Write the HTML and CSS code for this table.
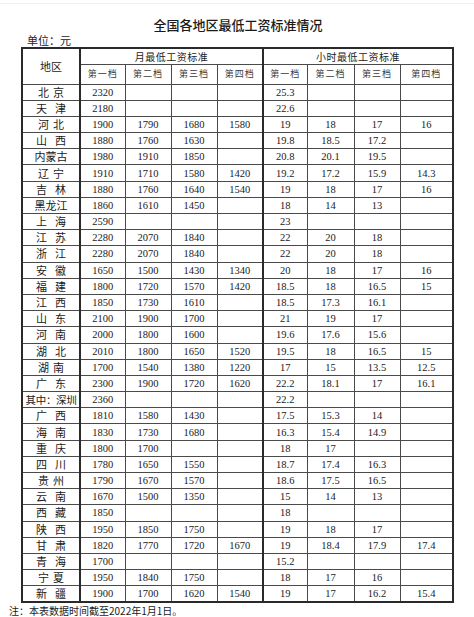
FILE: index.html
```html
<!DOCTYPE html>
<html lang="zh-CN">
<head>
<meta charset="utf-8">
<title>全国各地区最低工资标准情况</title>
<link rel="stylesheet" href="styles.css">
</head>
<body>
<div class="page">
  <h1 class="title">全国各地区最低工资标准情况</h1>
  <div class="unit">单位：元</div>
  <table class="wage">
    <colgroup>
      <col class="c-region"><col class="c1"><col class="c2"><col class="c3"><col class="c4">
      <col class="c5"><col class="c6"><col class="c7"><col class="c8">
    </colgroup>
    <thead>
      <tr class="h1">
        <th rowspan="2" class="region thick">地区</th>
        <th colspan="4" class="group thick">月最低工资标准</th>
        <th colspan="4" class="group">小时最低工资标准</th>
      </tr>
      <tr class="h2">
        <th class="sub">第一档</th><th class="sub">第二档</th><th class="sub">第三档</th><th class="sub thick">第四档</th>
        <th class="sub">第一档</th><th class="sub">第二档</th><th class="sub">第三档</th><th class="sub">第四档</th>
      </tr>
    </thead>
    <tbody>
      <tr><td class="region"><span class="nm n">北京</span></td><td>2320</td><td></td><td></td><td class="thick"></td><td>25.3</td><td></td><td></td><td></td></tr>
      <tr><td class="region"><span class="nm w">天津</span></td><td>2180</td><td></td><td></td><td class="thick"></td><td>22.6</td><td></td><td></td><td></td></tr>
      <tr><td class="region"><span class="nm n">河北</span></td><td>1900</td><td>1790</td><td>1680</td><td class="thick">1580</td><td>19</td><td>18</td><td>17</td><td>16</td></tr>
      <tr><td class="region"><span class="nm w">山西</span></td><td>1880</td><td>1760</td><td>1630</td><td class="thick"></td><td>19.8</td><td>18.5</td><td>17.2</td><td></td></tr>
      <tr><td class="region"><span class="nm">内蒙古</span></td><td>1980</td><td>1910</td><td>1850</td><td class="thick"></td><td>20.8</td><td>20.1</td><td>19.5</td><td></td></tr>
      <tr><td class="region"><span class="nm n">辽宁</span></td><td>1910</td><td>1710</td><td>1580</td><td class="thick">1420</td><td>19.2</td><td>17.2</td><td>15.9</td><td>14.3</td></tr>
      <tr><td class="region"><span class="nm w">吉林</span></td><td>1880</td><td>1760</td><td>1640</td><td class="thick">1540</td><td>19</td><td>18</td><td>17</td><td>16</td></tr>
      <tr><td class="region"><span class="nm">黑龙江</span></td><td>1860</td><td>1610</td><td>1450</td><td class="thick"></td><td>18</td><td>14</td><td>13</td><td></td></tr>
      <tr><td class="region"><span class="nm w">上海</span></td><td>2590</td><td></td><td></td><td class="thick"></td><td>23</td><td></td><td></td><td></td></tr>
      <tr><td class="region"><span class="nm w">江苏</span></td><td>2280</td><td>2070</td><td>1840</td><td class="thick"></td><td>22</td><td>20</td><td>18</td><td></td></tr>
      <tr><td class="region"><span class="nm w">浙江</span></td><td>2280</td><td>2070</td><td>1840</td><td class="thick"></td><td>22</td><td>20</td><td>18</td><td></td></tr>
      <tr><td class="region"><span class="nm w">安徽</span></td><td>1650</td><td>1500</td><td>1430</td><td class="thick">1340</td><td>20</td><td>18</td><td>17</td><td>16</td></tr>
      <tr><td class="region"><span class="nm w">福建</span></td><td>1800</td><td>1720</td><td>1570</td><td class="thick">1420</td><td>18.5</td><td>18</td><td>16.5</td><td>15</td></tr>
      <tr><td class="region"><span class="nm w">江西</span></td><td>1850</td><td>1730</td><td>1610</td><td class="thick"></td><td>18.5</td><td>17.3</td><td>16.1</td><td></td></tr>
      <tr><td class="region"><span class="nm w">山东</span></td><td>2100</td><td>1900</td><td>1700</td><td class="thick"></td><td>21</td><td>19</td><td>17</td><td></td></tr>
      <tr><td class="region"><span class="nm w">河南</span></td><td>2000</td><td>1800</td><td>1600</td><td class="thick"></td><td>19.6</td><td>17.6</td><td>15.6</td><td></td></tr>
      <tr><td class="region"><span class="nm w">湖北</span></td><td>2010</td><td>1800</td><td>1650</td><td class="thick">1520</td><td>19.5</td><td>18</td><td>16.5</td><td>15</td></tr>
      <tr><td class="region"><span class="nm n">湖南</span></td><td>1700</td><td>1540</td><td>1380</td><td class="thick">1220</td><td>17</td><td>15</td><td>13.5</td><td>12.5</td></tr>
      <tr><td class="region"><span class="nm w">广东</span></td><td>2300</td><td>1900</td><td>1720</td><td class="thick">1620</td><td>22.2</td><td>18.1</td><td>17</td><td>16.1</td></tr>
      <tr><td class="region"><span class="nm sz">其中：深圳</span></td><td>2360</td><td></td><td></td><td class="thick"></td><td>22.2</td><td></td><td></td><td></td></tr>
      <tr><td class="region"><span class="nm w">广西</span></td><td>1810</td><td>1580</td><td>1430</td><td class="thick"></td><td>17.5</td><td>15.3</td><td>14</td><td></td></tr>
      <tr><td class="region"><span class="nm w">海南</span></td><td>1830</td><td>1730</td><td>1680</td><td class="thick"></td><td>16.3</td><td>15.4</td><td>14.9</td><td></td></tr>
      <tr><td class="region"><span class="nm w">重庆</span></td><td>1800</td><td>1700</td><td></td><td class="thick"></td><td>18</td><td>17</td><td></td><td></td></tr>
      <tr><td class="region"><span class="nm w">四川</span></td><td>1780</td><td>1650</td><td>1550</td><td class="thick"></td><td>18.7</td><td>17.4</td><td>16.3</td><td></td></tr>
      <tr><td class="region"><span class="nm n">贵州</span></td><td>1790</td><td>1670</td><td>1570</td><td class="thick"></td><td>18.6</td><td>17.5</td><td>16.5</td><td></td></tr>
      <tr><td class="region"><span class="nm w">云南</span></td><td>1670</td><td>1500</td><td>1350</td><td class="thick"></td><td>15</td><td>14</td><td>13</td><td></td></tr>
      <tr><td class="region"><span class="nm w">西藏</span></td><td>1850</td><td></td><td></td><td class="thick"></td><td>18</td><td></td><td></td><td></td></tr>
      <tr><td class="region"><span class="nm w">陕西</span></td><td>1950</td><td>1850</td><td>1750</td><td class="thick"></td><td>19</td><td>18</td><td>17</td><td></td></tr>
      <tr><td class="region"><span class="nm w">甘肃</span></td><td>1820</td><td>1770</td><td>1720</td><td class="thick">1670</td><td>19</td><td>18.4</td><td>17.9</td><td>17.4</td></tr>
      <tr><td class="region"><span class="nm w">青海</span></td><td>1700</td><td></td><td></td><td class="thick"></td><td>15.2</td><td></td><td></td><td></td></tr>
      <tr><td class="region"><span class="nm n">宁夏</span></td><td>1950</td><td>1840</td><td>1750</td><td class="thick"></td><td>18</td><td>17</td><td>16</td><td></td></tr>
      <tr><td class="region"><span class="nm w">新疆</span></td><td>1900</td><td>1700</td><td>1620</td><td class="thick">1540</td><td>19</td><td>17</td><td>16.2</td><td>15.4</td></tr>
    </tbody>
  </table>
  <div class="note">注：本表数据时间截至2022年1月1日。</div>
</div>
</body>
</html>
```

FILE: styles.css
```css
html, body {
  margin: 0;
  padding: 0;
  background: #ffffff;
}

.page {
  width: 474px;
  box-sizing: border-box;
  border-top: 1px solid #f0f0f0;
  margin-top: 3px;
  font-family: "Noto Sans CJK SC", "Noto Sans", sans-serif;
  color: #1a1a1a;
}

.title {
  margin: 12px 0 0 0;
  height: 18px;
  line-height: 18px;
  font-size: 13px;
  font-weight: 500;
  text-align: center;
  color: #1a1a1a;
  padding-left: 2px;
}

.unit {
  height: 12px;
  line-height: 12px;
  margin-left: 27px;
  margin-bottom: 1px;
  font-size: 11px;
  color: #1a1a1a;
}

.wage {
  margin-left: 21px;
  width: 431px;
  table-layout: fixed;
  border-collapse: collapse;
  border: 2px solid #2a2a2a;
}

.c-region { width: 58px; }
.c1 { width: 45px; }
.c2 { width: 46px; }
.c3 { width: 46px; }
.c4 { width: 46px; }
.c5 { width: 44px; }
.c6 { width: 47px; }
.c7 { width: 46px; }
.c8 { width: 53px; }

.wage th,
.wage td {
  border: 1px solid #4a4a4a;
  padding: 0;
  text-align: center;
  vertical-align: middle;
  white-space: nowrap;
  overflow: hidden;
}

.wage .thick {
  border-right: 2px solid #2a2a2a;
}

.wage .region {
  border-right: 2px solid #2a2a2a;
}

.h1 { height: 16px; }
.h2 { height: 20px; }

.wage th {
  font-weight: normal;
  color: #222;
}

.wage th.region {
  font-size: 11px;
  line-height: 14px;
}

.wage th.group {
  font-size: 10px;
  letter-spacing: 0.5px;
  line-height: 13px;
}

.wage th.sub {
  font-size: 9px;
  letter-spacing: 1px;
  line-height: 12px;
  color: #3a3a3a;
}

.wage tbody tr {
  height: 16.2px;
}

.wage td {
  font-family: "Liberation Serif", "Times New Roman", serif;
  font-size: 10.5px;
  line-height: 13px;
  color: #1a1a1a;
}

.wage td.region {
  font-family: "Noto Sans CJK SC", "Noto Sans", sans-serif;
  font-size: 11px;
}

.nm {
  display: inline-block;
}

.nm.w {
  letter-spacing: 8px;
  margin-right: -8px;
}

.nm.n {
  letter-spacing: 4px;
  margin-right: -4px;
}

.nm.sz {
  font-size: 10.5px;
  letter-spacing: -0.3px;
}

.note {
  margin: 2px 0 0 9px;
  font-size: 10px;
  line-height: 12px;
  color: #1a1a1a;
}
```
